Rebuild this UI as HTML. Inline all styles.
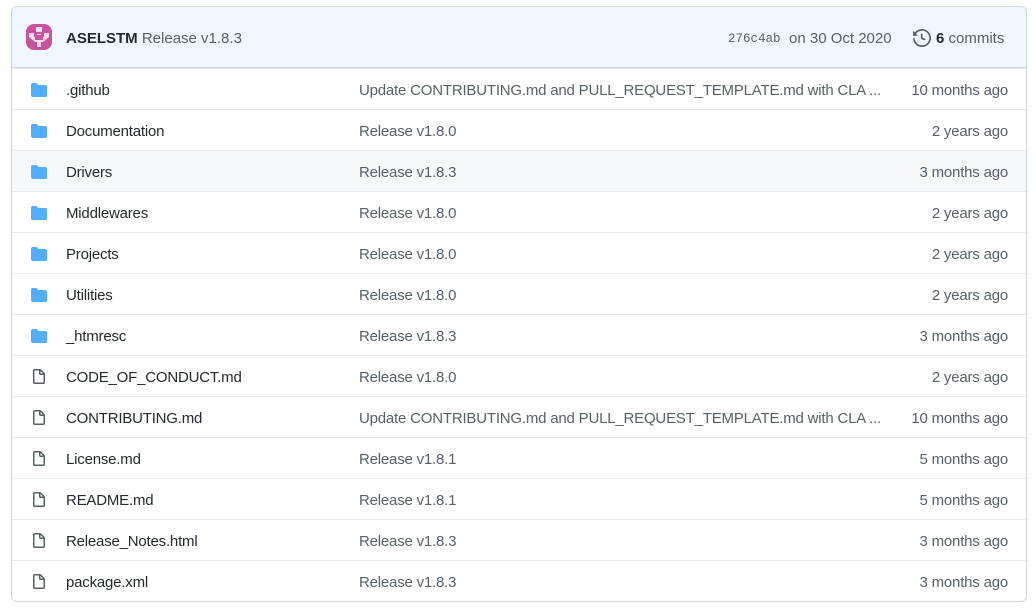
<!DOCTYPE html><html><head><style>
body{margin:0;width:1036px;height:612px;background:#fff;font-family:"Liberation Sans",sans-serif;font-size:15px;color:#24292f;position:relative;overflow:hidden}
.box{position:absolute;left:11px;top:6px;width:1014px;height:594px;border:1px solid #d0d7de;border-radius:6px;overflow:hidden}
.hd{height:60px;background:#f0f6ff;border-bottom:1px solid #d0d7de;position:relative}
.row{height:40px;border-top:1px solid #e6eaef;position:relative;line-height:44px}
.row:first-of-type{border-top:none}
.row.h{background:#f6f8fa}
.ic{position:absolute;left:18px;top:13px}
.n{position:absolute;left:54px;letter-spacing:-0.2px}
.m{position:absolute;left:347px;color:#57606a;letter-spacing:-0.2px;white-space:nowrap}
.d{position:absolute;right:18px;color:#57606a;letter-spacing:-0.2px}
</style></head><body><div class="box">
<div class="hd">
<svg style="position:absolute;left:14px;top:17px" width="26" height="26" viewBox="0 0 26 26"><rect width="26" height="26" rx="8" fill="#c9529f"/><rect x="10" y="3" width="6" height="5" fill="#f4dcec"/><path d="M3 9h5v4h3v-3h4v3h3V9h5v4l-6 5h-2v5h-4v-5h-2L3 13z" fill="#f4dcec"/><rect x="9" y="11" width="8" height="5" fill="#c9529f"/></svg>
<div style="position:absolute;left:54px;top:23px"><b>ASELSTM</b> <span style="color:#57606a">Release v1.8.3</span></div>
<div style="position:absolute;left:716px;top:25px;font-family:'Liberation Mono',monospace;font-size:12.5px;color:#57606a">276c4ab</div>
<div style="position:absolute;left:777px;top:23px;color:#57606a">on 30 Oct 2020</div>
<svg style="position:absolute;left:901px;top:22px" width="18" height="18" viewBox="0 0 16 16"><path fill="#57606a" d="M1.643 3.143L.427 1.927A.25.25 0 000 2.104V5.750c0 .138.112.25.25.25h3.646a.25.25 0 00.177-.427L2.715 4.215a6.5 6.5 0 11-1.18 4.458.75.75 0 10-1.493.154 8.001 8.001 0 101.6-5.684zM7.75 4a.75.75 0 01.75.75v2.992l2.028.812a.75.75 0 01-.557 1.392l-2.5-1A.75.75 0 017 8.25v-3.5A.75.75 0 017.75 4z"/></svg>
<div style="position:absolute;left:924px;top:23px"><b>6</b> <span style="color:#57606a">commits</span></div>
</div>
<div id="rows"></div>
</div>
<script>
var F='<svg class="ic" width="18" height="16" viewBox="0 0 16 16"><path fill="#54aeff" d="M1.75 1A1.75 1.75 0 000 2.75v10.5C0 14.216.784 15 1.750 15h12.5A1.75 1.75 0 0016 13.25v-8.5A1.75 1.75 0 0014.25 3H7.5a.25.25 0 01-.2-.1l-.9-1.2C6.07 1.26 5.55 1 5 1H1.75z"/></svg>';
var D='<svg class="ic" width="18" height="16" viewBox="0 0 16 16"><path fill="#57606a" d="M3.75 1.5a.25.25 0 00-.25.25v11.5c0 .138.112.25.25.25h8.5a.25.25 0 00.25-.25V6H9.75A1.75 1.75 0 018 4.25V1.5H3.75zm5.75.56v2.19c0 .138.112.25.25.25h2.19L9.5 2.060zM2 1.75C2 .784 2.784 0 3.750 0h5.086c.464 0 .909.184 1.237.513l3.414 3.414c.329.328.513.773.513 1.237v8.086A1.75 1.75 0 0112.25 15h-8.5A1.75 1.75 0 012 13.25V1.75z"/></svg>';
var C='Update CONTRIBUTING.md and PULL_REQUEST_TEMPLATE.md with CLA ...';
var r=[[F,'.github',C,'10 months ago'],[F,'Documentation','Release v1.8.0','2 years ago'],[F,'Drivers','Release v1.8.3','3 months ago',1],[F,'Middlewares','Release v1.8.0','2 years ago'],[F,'Projects','Release v1.8.0','2 years ago'],[F,'Utilities','Release v1.8.0','2 years ago'],[F,'_htmresc','Release v1.8.3','3 months ago'],[D,'CODE_OF_CONDUCT.md','Release v1.8.0','2 years ago'],[D,'CONTRIBUTING.md',C,'10 months ago'],[D,'License.md','Release v1.8.1','5 months ago'],[D,'README.md','Release v1.8.1','5 months ago'],[D,'Release_Notes.html','Release v1.8.3','3 months ago'],[D,'package.xml','Release v1.8.3','3 months ago']];
var h='';r.forEach(function(x){h+='<div class="row'+(x[4]?' h':'')+'">'+x[0]+'<span class="n">'+x[1]+'</span><span class="m">'+x[2]+'</span><span class="d">'+x[3]+'</span></div>'});
document.getElementById('rows').outerHTML=h;
</script></body></html>
